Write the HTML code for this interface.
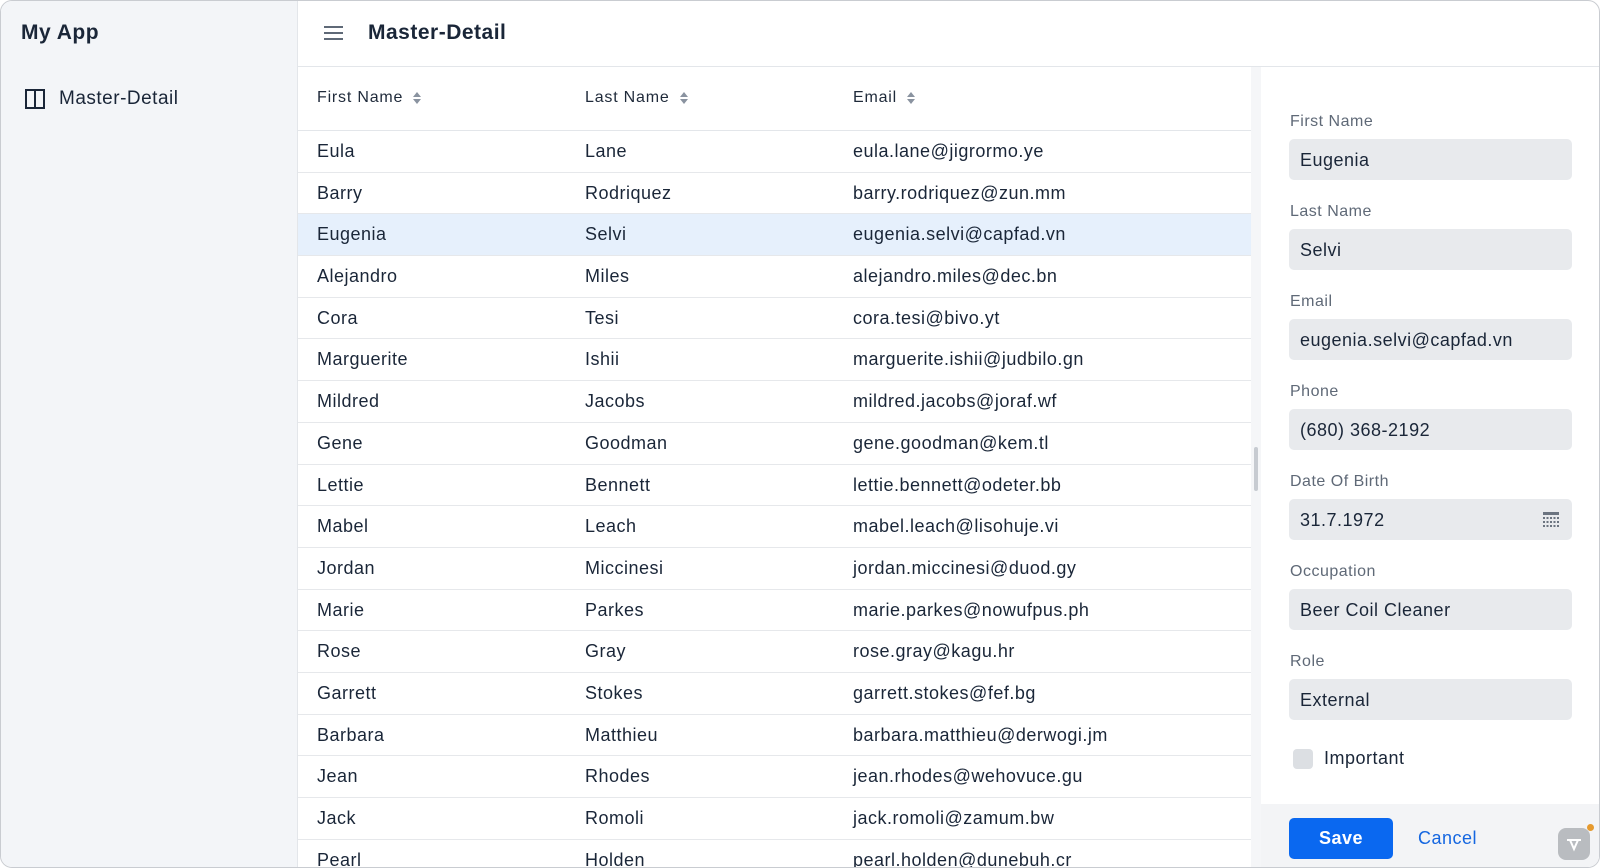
<!DOCTYPE html>
<html><head><style>
*{box-sizing:border-box;margin:0;padding:0}
body{width:1600px;height:868px;overflow:hidden;font-family:"Liberation Sans",sans-serif;color:#1a2638;background:#fff;position:relative;letter-spacing:0.5px}
.frame{position:absolute;inset:0;border:1px solid #c9ccd1;border-radius:12px;overflow:hidden;background:#fff}
.side{position:absolute;left:0;top:0;width:297px;height:868px;background:#f3f5f8;border-right:1px solid #e3e6ea}
.side .t{position:absolute;left:20px;top:20px;font-size:21px;font-weight:600}
.side .n{position:absolute;left:24px;top:87px;font-size:19px;display:flex;align-items:center}
.hdr{position:absolute;left:297px;top:0;right:0;height:66px;border-bottom:1px solid #e3e6ea}
.hdr .m{position:absolute;left:26px;top:24px}
.hdr .t{position:absolute;left:70px;top:20px;font-size:21px;font-weight:600}
.tbl{position:absolute;left:297px;top:66px;width:953px}
.th{height:64px;border-bottom:1px solid #e3e6ea;position:relative;font-size:16px;color:#1f2a3a;letter-spacing:0.8px}
.th span{position:absolute;top:22px}
.r{height:41.7px;border-bottom:1px solid #e6e8eb;position:relative;font-size:18px}
.r span{position:absolute;top:10px}
.c1{left:19px}.c2{left:287px}.c3{left:555px}
.sel{background:#e6f0fc}
.sort{display:inline-block;vertical-align:middle;margin-left:10px}
.scroll{position:absolute;left:1250px;top:66px;width:10px;height:802px;background:#f5f6f8}
.scroll div{position:absolute;left:3px;top:380px;width:4px;height:44px;background:#c7cbd1;border-radius:2px}
.det{position:absolute;left:1260px;top:66px;right:0;bottom:0;background:#fff}
.lb{position:absolute;left:29px;font-size:16px;color:#5f6977}
.in{position:absolute;left:28px;width:283px;height:41px;background:#e8eaed;border-radius:5px;font-size:18px;padding:11px 11px 0}
.foot{position:absolute;left:1260px;top:803px;right:0;bottom:0;background:#f3f4f6}
.save{position:absolute;left:28px;top:14px;width:104px;height:41px;background:#0a68f0;color:#fff;border-radius:5px;font-size:18px;font-weight:600;text-align:center;line-height:41px}
.cancel{position:absolute;left:157px;top:24px;color:#1466e0;font-size:18px}
</style></head><body><div class="frame">
<div class="side"><div class="t">My App</div>
<div class="n"><svg width="20" height="20" viewBox="0 0 20 20" style="margin-right:14px"><rect x="1" y="1" width="18" height="18" fill="none" stroke="#1a2638" stroke-width="2"/><line x1="10" y1="1" x2="10" y2="19" stroke="#1a2638" stroke-width="2"/></svg>Master-Detail</div></div>
<div class="hdr"><svg class="m" width="19" height="16" viewBox="0 0 19 16"><path d="M0 2h19M0 8h19M0 14h19" stroke="#5f6977" stroke-width="2"/></svg><div class="t">Master-Detail</div></div>
<div class="tbl">
<div class="th"><span class="c1">First Name<svg class="sort" width="8" height="14" viewBox="0 0 8 14"><path d="M0 6L4 1L8 6ZM0 8L4 13L8 8Z" fill="#8a93a0"/></svg></span><span class="c2">Last Name<svg class="sort" width="8" height="14" viewBox="0 0 8 14"><path d="M0 6L4 1L8 6ZM0 8L4 13L8 8Z" fill="#8a93a0"/></svg></span><span class="c3">Email<svg class="sort" width="8" height="14" viewBox="0 0 8 14"><path d="M0 6L4 1L8 6ZM0 8L4 13L8 8Z" fill="#8a93a0"/></svg></span></div>
<div class="r"><span class="c1">Eula</span><span class="c2">Lane</span><span class="c3">eula.lane@jigrormo.ye</span></div>
<div class="r"><span class="c1">Barry</span><span class="c2">Rodriquez</span><span class="c3">barry.rodriquez@zun.mm</span></div>
<div class="r sel"><span class="c1">Eugenia</span><span class="c2">Selvi</span><span class="c3">eugenia.selvi@capfad.vn</span></div>
<div class="r"><span class="c1">Alejandro</span><span class="c2">Miles</span><span class="c3">alejandro.miles@dec.bn</span></div>
<div class="r"><span class="c1">Cora</span><span class="c2">Tesi</span><span class="c3">cora.tesi@bivo.yt</span></div>
<div class="r"><span class="c1">Marguerite</span><span class="c2">Ishii</span><span class="c3">marguerite.ishii@judbilo.gn</span></div>
<div class="r"><span class="c1">Mildred</span><span class="c2">Jacobs</span><span class="c3">mildred.jacobs@joraf.wf</span></div>
<div class="r"><span class="c1">Gene</span><span class="c2">Goodman</span><span class="c3">gene.goodman@kem.tl</span></div>
<div class="r"><span class="c1">Lettie</span><span class="c2">Bennett</span><span class="c3">lettie.bennett@odeter.bb</span></div>
<div class="r"><span class="c1">Mabel</span><span class="c2">Leach</span><span class="c3">mabel.leach@lisohuje.vi</span></div>
<div class="r"><span class="c1">Jordan</span><span class="c2">Miccinesi</span><span class="c3">jordan.miccinesi@duod.gy</span></div>
<div class="r"><span class="c1">Marie</span><span class="c2">Parkes</span><span class="c3">marie.parkes@nowufpus.ph</span></div>
<div class="r"><span class="c1">Rose</span><span class="c2">Gray</span><span class="c3">rose.gray@kagu.hr</span></div>
<div class="r"><span class="c1">Garrett</span><span class="c2">Stokes</span><span class="c3">garrett.stokes@fef.bg</span></div>
<div class="r"><span class="c1">Barbara</span><span class="c2">Matthieu</span><span class="c3">barbara.matthieu@derwogi.jm</span></div>
<div class="r"><span class="c1">Jean</span><span class="c2">Rhodes</span><span class="c3">jean.rhodes@wehovuce.gu</span></div>
<div class="r"><span class="c1">Jack</span><span class="c2">Romoli</span><span class="c3">jack.romoli@zamum.bw</span></div>
<div class="r"><span class="c1">Pearl</span><span class="c2">Holden</span><span class="c3">pearl.holden@dunebuh.cr</span></div>
</div>
<div class="scroll"><div></div></div>
<div class="det">
<div class="lb" style="top:46px">First Name</div><div class="in" style="top:72px">Eugenia</div>
<div class="lb" style="top:136px">Last Name</div><div class="in" style="top:162px">Selvi</div>
<div class="lb" style="top:226px">Email</div><div class="in" style="top:252px">eugenia.selvi@capfad.vn</div>
<div class="lb" style="top:316px">Phone</div><div class="in" style="top:342px">(680) 368-2192</div>
<div class="lb" style="top:406px">Date Of Birth</div><div class="in" style="top:432px">31.7.1972<svg width="18" height="18" viewBox="0 0 18 18" style="position:absolute;right:12px;top:12px"><rect x="1" y="1" width="16" height="3" fill="#6b7480"/><g fill="#6b7480"><rect x="1" y="6" width="2" height="2"/><rect x="4.5" y="6" width="2" height="2"/><rect x="8" y="6" width="2" height="2"/><rect x="11.5" y="6" width="2" height="2"/><rect x="15" y="6" width="2" height="2"/><rect x="1" y="10" width="2" height="2"/><rect x="4.5" y="10" width="2" height="2"/><rect x="8" y="10" width="2" height="2"/><rect x="11.5" y="10" width="2" height="2"/><rect x="15" y="10" width="2" height="2"/><rect x="1" y="14" width="2" height="2"/><rect x="4.5" y="14" width="2" height="2"/><rect x="8" y="14" width="2" height="2"/><rect x="11.5" y="14" width="2" height="2"/><rect x="15" y="14" width="2" height="2"/></g></svg></div>
<div class="lb" style="top:496px">Occupation</div><div class="in" style="top:522px">Beer Coil Cleaner</div>
<div class="lb" style="top:586px">Role</div><div class="in" style="top:612px">External</div>
<div style="position:absolute;left:32px;top:682px;width:20px;height:20px;background:#dcdfe3;border-radius:4px"></div>
<div style="position:absolute;left:63px;top:681px;font-size:18px">Important</div>
</div>
<div class="foot"><div class="save">Save</div><div class="cancel">Cancel</div>
<div style="position:absolute;left:297px;top:24px;width:32px;height:32px;background:#b9bcc0;border-radius:8px"><svg width="32" height="32" viewBox="0 0 32 32"><path d="M9 12h14M12 12l4 9l4-9" stroke="#fff" stroke-width="2" fill="none"/></svg></div>
<div style="position:absolute;left:326px;top:20px;width:7px;height:7px;border-radius:50%;background:#e69a2e"></div></div>
</div></body></html>
